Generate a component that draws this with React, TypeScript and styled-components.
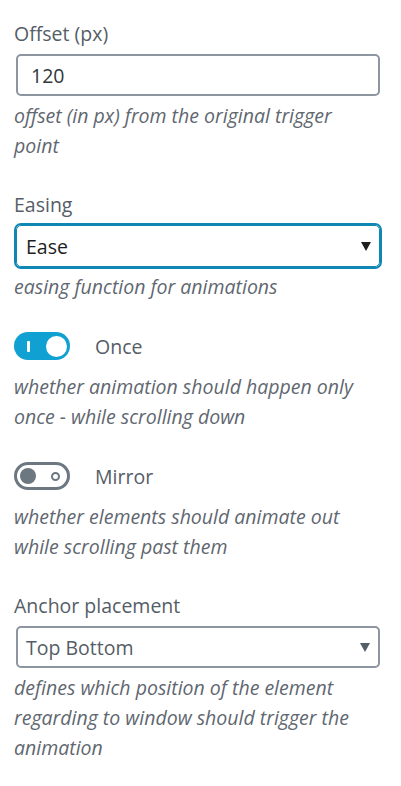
import styled, { createGlobalStyle } from "styled-components";

const GlobalStyle = createGlobalStyle`
    html, body {
        margin:0;
        padding:0;
        background:#fff;
    }
    body {
        font-family:"Open Sans", "Noto Sans", sans-serif;
        color:#555d66;
    }
`;

const Panel = styled.div`
    width:401px;
    padding:19px 20px 20px 14px;
    box-sizing:border-box;
`;

const Field = styled.div`
    margin-bottom:29px;
`;

const Label = styled.label`
    display:block;
    font-size:19.5px;
    line-height:30px;
    color:#555d66;
    margin-bottom:5px;
`;

const TextInput = styled.div`
    box-sizing:border-box;
    height:42px;
    margin-left:2px;
    width:364px;
    border:2px solid #8d96a0;
    border-radius:5px;
    padding:0 13px;
    display:flex;
    align-items:center;
    font-size:19.5px;
    color:#32373c;
`;

const Select = styled.div<{ $focused?: boolean }>`
    box-sizing:border-box;
    height:42px;
    margin-left:2px;
    width:364px;
    border:${(p) => (p.$focused ? "1px solid #0f87b4" : "2px solid #8d96a0")};
    box-shadow:${(p) => (p.$focused ? "0 0 0 2px #0f87b4" : "none")};
    border-radius:5px;
    padding:0 8px 0 ${(p) => (p.$focused ? "9px" : "8px")};
    display:flex;
    align-items:center;
    justify-content:space-between;
    font-size:19.5px;
    color:${(p) => (p.$focused ? "#1e1e1e" : "#555d66")};
`;

const Arrow = styled.span<{ $dark?: boolean }>`
    width:0;
    height:0;
    border-left:5px solid transparent;
    border-right:5px solid transparent;
    border-top:9px solid ${(p) => (p.$dark ? "#1e1e1e" : "#555d66")};
`;

const Help = styled.p`
    margin:5px 0 0;
    font-style:italic;
    font-size:19.5px;
    line-height:30px;
    color:#5f6770;
`;

const ToggleRow = styled.div`
    display:flex;
    align-items:center;
    gap:25px;
    height:30px;
    margin-bottom:11px;
`;

const Track = styled.span<{ $on?: boolean }>`
    box-sizing:border-box;
    width:56px;
    height:28px;
    border-radius:14px;
    background:${(p) => (p.$on ? "#11a0d2" : "#fff")};
    border:${(p) => (p.$on ? "none" : "3px solid #6c7781")};
    display:flex;
    align-items:center;
    justify-content:space-between;
    padding:${(p) => (p.$on ? "0 3px 0 13px" : "0 7px 0 3px")};
    flex-shrink:0;
`;

const OnMark = styled.span`
    width:3px;
    height:11px;
    background:#fff;
    border-radius:1px;
`;

const OnKnob = styled.span`
    width:21px;
    height:21px;
    border-radius:50%;
    background:#fff;
`;

const OffKnob = styled.span`
    width:16px;
    height:16px;
    border-radius:50%;
    background:#6c7781;
`;

const OffMark = styled.span`
    box-sizing:border-box;
    width:9px;
    height:9px;
    border-radius:50%;
    border:2px solid #6c7781;
`;

const ToggleLabel = styled.span`
    font-size:19.5px;
    color:#555d66;
`;

function Toggle({ on }: { on: boolean }) {
    return on ? (
        <Track $on>
            <OnMark />
            <OnKnob />
        </Track>
    ) : (
        <Track>
            <OffKnob />
            <OffMark />
        </Track>
    );
}

export default function App() {
    return (
        <Panel>
            <GlobalStyle />
            <Field>
                <Label>Offset (px)</Label>
                <TextInput>120</TextInput>
                <Help>offset (in px) from the original trigger point</Help>
            </Field>
            <Field>
                <Label>Easing</Label>
                <Select $focused>
                    Ease
                    <Arrow $dark />
                </Select>
                <Help>easing function for animations</Help>
            </Field>
            <Field>
                <ToggleRow>
                    <Toggle on />
                    <ToggleLabel>Once</ToggleLabel>
                </ToggleRow>
                <Help>whether animation should happen only once - while scrolling down</Help>
            </Field>
            <Field>
                <ToggleRow>
                    <Toggle on={false} />
                    <ToggleLabel>Mirror</ToggleLabel>
                </ToggleRow>
                <Help>whether elements should animate out while scrolling past them</Help>
            </Field>
            <Field>
                <Label>Anchor placement</Label>
                <Select>
                    Top Bottom
                    <Arrow />
                </Select>
                <Help>defines which position of the element regarding to window should trigger the animation</Help>
            </Field>
        </Panel>
    );
}
